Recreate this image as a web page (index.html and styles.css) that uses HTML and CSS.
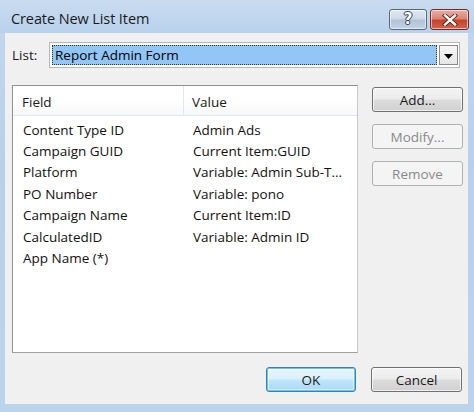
FILE: index.html
```html
<!DOCTYPE html>
<html>
<head>
<meta charset="utf-8">
<link rel="stylesheet" href="styles.css">
</head>
<body>
<div class="window">
  <div class="titlebar">
    <span class="title">Create New List Item</span>
    <div class="caption-buttons">
      <div class="cap help"><span class="glyph">?</span></div>
      <div class="cap close">
        <svg width="16" height="12" viewBox="0 0 16 12">
          <path d="M3 1.5 L13 10.5 M13 1.5 L3 10.5" stroke="#5a2018" stroke-width="4.2" stroke-linecap="square" fill="none"/>
          <path d="M3 1.5 L13 10.5 M13 1.5 L3 10.5" stroke="#ffffff" stroke-width="2.4" stroke-linecap="square" fill="none"/>
        </svg>
      </div>
    </div>
  </div>
  <div class="client">
    <div class="list-row">
      <span class="label">List:</span>
      <div class="combo">
        <div class="combo-value"><span>Report Admin Form</span></div>
        <div class="combo-btn">
          <svg width="9" height="5" viewBox="0 0 9 5"><path d="M0 0 H9 L4.5 5 Z" fill="#000"/></svg>
        </div>
      </div>
    </div>
    <div class="main">
      <div class="listbox">
        <div class="header">
          <div class="col field">Field</div>
          <div class="col value">Value</div>
        </div>
        <div class="rows">
          <div class="row"><span class="c1">Content Type ID</span><span class="c2">Admin Ads</span></div>
          <div class="row"><span class="c1">Campaign GUID</span><span class="c2">Current Item:GUID</span></div>
          <div class="row"><span class="c1">Platform</span><span class="c2">Variable: Admin Sub-T...</span></div>
          <div class="row"><span class="c1">PO Number</span><span class="c2">Variable: pono</span></div>
          <div class="row"><span class="c1">Campaign Name</span><span class="c2">Current Item:ID</span></div>
          <div class="row"><span class="c1">CalculatedID</span><span class="c2">Variable: Admin ID</span></div>
          <div class="row"><span class="c1">App Name (*)</span><span class="c2"></span></div>
        </div>
      </div>
      <div class="side">
        <div class="btn">Add...</div>
        <div class="btn disabled">Modify...</div>
        <div class="btn disabled">Remove</div>
      </div>
    </div>
    <div class="footer">
      <div class="btn default">OK</div>
      <div class="btn">Cancel</div>
    </div>
  </div>
</div>
</body>
</html>
```
FILE: styles.css
```css
html, body {
  margin: 0;
  padding: 0;
}
body {
  width: 474px;
  height: 412px;
  overflow: hidden;
  font-family: "Open Sans", "Noto Sans", sans-serif;
  font-size: 13px;
  color: #000;
}
.window {
  width: 474px;
  height: 412px;
  background: linear-gradient(#c3d8ef, #b8d0ea 40%, #bcd3ec);
  display: flex;
  flex-direction: column;
}
.titlebar {
  height: 33px;
  display: flex;
  align-items: flex-start;
  justify-content: space-between;
  background: linear-gradient(#c9dcf1, #b9d1eb);
}
.title {
  margin: 9px 0 0 11px;
  font-size: 14.5px;
  line-height: 20px;
  color: #1a1a1a;
  letter-spacing: -0.1px;
}
.caption-buttons {
  display: flex;
  gap: 3px;
  margin: 9px 5px 0 0;
}
.cap {
  height: 21px;
  box-sizing: border-box;
  border: 1px solid #59687c;
  border-radius: 3px;
  display: flex;
  align-items: center;
  justify-content: center;
  box-shadow: inset 0 0 0 1px rgba(255,255,255,0.55);
}
.help {
  width: 38px;
  background: linear-gradient(#e2eaf4 0%, #cbd8e8 48%, #b1c2d8 52%, #c4d3e6 100%);
}
.help .glyph {
  font-family: "DejaVu Sans", sans-serif;
  font-weight: bold;
  font-size: 15px;
  line-height: 15px;
  color: #ffffff;
  text-shadow: 0 0 1px #3a4a5e, 0 0 1px #3a4a5e, 1px 0 0 #3a4a5e, -1px 0 0 #3a4a5e, 0 1px 0 #3a4a5e, 0 -1px 0 #3a4a5e;
}
.close {
  width: 39px;
  border-color: #6e2d24;
  background: linear-gradient(#eab0a5 0%, #dc8575 45%, #c8432c 55%, #d0654d 100%);
}
.client {
  flex: 1;
  margin: 0 6px 8px 5px;
  background: #f0f0f0;
  display: flex;
  flex-direction: column;
  padding: 9px 0 0 7px;
  box-sizing: border-box;
}
.list-row {
  display: flex;
  align-items: center;
  height: 26px;
}
.label {
  width: 37px;
  font-size: 13.5px;
  color: #1a1a1a;
}
.combo {
  width: 411px;
  height: 26px;
  box-sizing: border-box;
  border: 1px solid #b7b7b7;
  background: #fff;
  display: flex;
  align-items: stretch;
  padding: 2px 1px 2px 2px;
  gap: 2px;
}
.combo-value {
  flex: 1;
  background: #92c6f7;
  border: 1px dotted #333;
  display: flex;
  align-items: center;
  padding-left: 2px;
  font-size: 13.5px;
}
.combo-btn {
  width: 19px;
  box-sizing: border-box;
  border: 1px solid #8a8a8a;
  background: linear-gradient(#f6f6f6, #e6e6e6);
  display: flex;
  align-items: center;
  justify-content: center;
  padding-top: 2px;
}
.main {
  display: flex;
  margin-top: 17px;
  gap: 14px;
}
.listbox {
  width: 346px;
  height: 268px;
  box-sizing: border-box;
  border: 1px solid #8e9095;
  border-right-color: #c8c8c8;
  border-bottom-color: #a0a0a0;
  background: #fff;
}
.header {
  display: flex;
  height: 29px;
  border-bottom: 1px solid #e3e6ea;
  background: linear-gradient(#ffffff, #ffffff 50%, #f6f7f9);
}
.col {
  display: flex;
  align-items: center;
  font-size: 13.5px;
  color: #1a1a1a;
  padding-top: 2px;
  box-sizing: border-box;
}
.col.field {
  width: 171px;
  padding-left: 9px;
  border-right: 1px solid #e3e6ea;
}
.col.value {
  padding-left: 8px;
}
.rows {
  padding-top: 3px;
}
.row {
  display: flex;
  height: 21.4px;
  align-items: center;
  font-size: 13.5px;
  color: #111;
}
.c1 {
  width: 180px;
  box-sizing: border-box;
  padding-left: 10px;
  flex: none;
}
.c2 {
  white-space: nowrap;
}
.side {
  display: flex;
  flex-direction: column;
  gap: 12px;
  padding-top: 2px;
}
.btn {
  width: 91px;
  height: 25px;
  box-sizing: border-box;
  border: 1px solid #707070;
  border-radius: 3px;
  background: linear-gradient(#f4f4f4 0%, #ececec 48%, #dcdcdc 52%, #d0d0d0 100%);
  box-shadow: inset 0 0 0 1px rgba(255,255,255,0.7);
  display: flex;
  align-items: center;
  justify-content: center;
  font-size: 13.5px;
  color: #1a1a1a;
}
.btn.disabled {
  border-color: #adb2b5;
  background: #f4f4f4;
  color: #8a8a8a;
  box-shadow: none;
}
.footer {
  display: flex;
  justify-content: flex-end;
  gap: 15px;
  margin-top: 14px;
  padding-right: 6px;
}
.btn.default {
  width: 90px;
  border-color: #3c7fb1;
  box-shadow: inset 0 0 0 1px #6cc4ee, inset 0 0 0 2px rgba(255,255,255,0.5);
  background: linear-gradient(#eaf6fd 0%, #d9f0fc 48%, #bee6fd 52%, #a7d9f5 100%);
}
```
